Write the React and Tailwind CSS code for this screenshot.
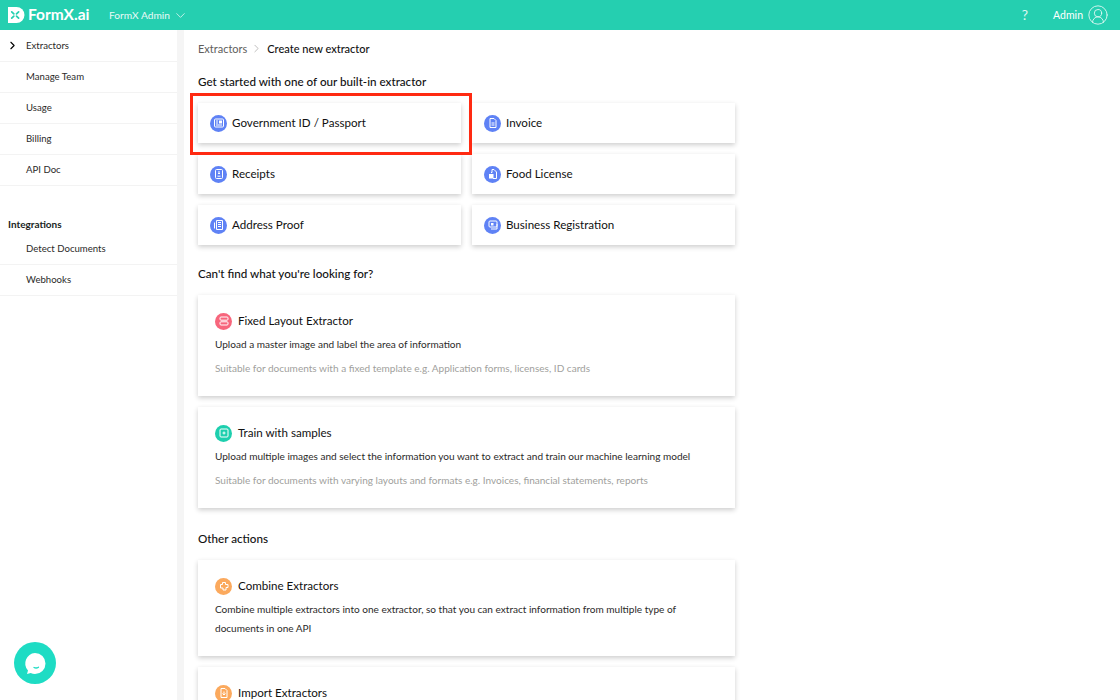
import React from "react";
import { ChevronRight, ChevronDown, CircleUserRound } from "lucide-react";

const F = "font-['Lato','Noto_Sans',sans-serif]";

function Round({ color, children }) {
  return (
    <span className={`w-[17px] h-[17px] ${color} rounded-full flex items-center justify-center shrink-0`}>
      <svg width="12" height="12" viewBox="0 0 12 12" fill="none" stroke="#fff" strokeWidth="1">{children}</svg>
    </span>
  );
}

const idIcon = <><rect x="1.500" y="2" width="9" height="8" rx="1" /><rect x="6" y="3.500" width="3" height="3" fill="#fff" stroke="none" /><path d="M3 4h2M3 6h2M3 8h6" /></>;
const receiptIcon = <><rect x="2.500" y="1.500" width="7" height="9" rx="1" /><path d="M6 3v3M5 5l1 1 1-1M4.500 8.200h3" /></>;
const addressIcon = <><path d="M3.500 1.500h6v9h-6z" /><path d="M5 3.500h3M5 5.500h3M5 7.500h3" /><path d="M1.500 3.500v6" /></>;
const invoiceIcon = <><path d="M3 1.500h4l2 2v7H3z" /><path d="M4.500 6h3M4.500 8h3" /></>;
const foodIcon = <><path d="M5 1.500h2l2.500 2.500v6.500H6" /><rect x="2" y="6" width="4.500" height="4.500" fill="#fff" stroke="none" /><path d="M5 1.500v3H4" /></>;
const bizIcon = <><rect x="2" y="2" width="8" height="6" rx="1" /><path d="M4 10h6V5" /><rect x="4" y="4" width="2.500" height="2.500" fill="#fff" stroke="none" /></>;
const fixedIcon = <><rect x="2" y="2" width="8" height="3.200" rx="1" /><rect x="2" y="6.800" width="8" height="3.200" rx="1" /></>;
const trainIcon = <><rect x="2" y="2" width="8" height="8" rx="1" /><path d="M6 4.500v3M4.500 6h3" /></>;
const combineIcon = <path d="M4.500 2.500h3v2H10v3H8V10H5V8H2.500V4.500h2z" />;
const importIcon = <><path d="M3 1.500h4l2 2v7H3z" /><path d="M6 4.500V8M4.500 6.500L6 8l1.500-1.500" /></>;

function SmallCard({ label, icon }) {
  return (
    <div className="h-10 bg-white flex items-center pl-3 gap-[5px] shadow-[0_2px_5px_rgba(0,0,0,0.2)]">
      <Round color="bg-[#5f82f5]">{icon}</Round>
      <span className="text-[11.6px] leading-none text-[#111]">{label}</span>
    </div>
  );
}

function BigCard({ title, color, icon, desc, note, h }) {
  return (
    <div className={`${h} bg-white shadow-[0_2px_5px_rgba(0,0,0,0.2)] pt-[17px] px-[17px] shrink-0`}>
      <div className="flex items-center gap-[6px] h-[18px]">
        <Round color={color}>{icon}</Round>
        <span className="text-[11.6px] leading-none text-[#111]">{title}</span>
      </div>
      <p className="mt-[5px] text-[10.05px] leading-[19px] text-[#2b2a29]">{desc}</p>
      {note && <p className="mt-[5px] text-[10.05px] leading-[19px] text-[#a19f9d]">{note}</p>}
    </div>
  );
}

function NavItem({ label, active }) {
  return (
    <div className="h-[31px] flex items-center border-b border-[#f3f3f3] relative pl-[26px] pt-[1px] text-[9.6px] text-[#2b2a29]">
      {active && <ChevronRight className="absolute left-[6px] top-[8px] text-black" size={13} strokeWidth={2} />}
      {label}
    </div>
  );
}

export default function App() {
  return (
    <div className={`w-[1120px] h-[700px] overflow-hidden flex flex-col bg-white ${F}`}>
      <header className="h-[30px] shrink-0 bg-[#25cfb0] flex items-center text-white">
        <div className="ml-2 flex items-center gap-[3px] w-[101px]">
          <svg width="17" height="16" viewBox="0 0 16 15">
            <path d="M0 0h8a7.500 7.500 0 0 1 0 15H0z" fill="#fff" />
            <path d="M3.500 4.500l2 2M10 4.500l-2 2M3.500 10.500l2-2M10 10.500l-2-2" stroke="#25cfb0" strokeWidth="1.600" strokeLinecap="round" />
          </svg>
          <span className="text-[15.5px] font-bold leading-none">FormX.ai</span>
        </div>
        <span className="text-[10.2px] leading-none opacity-90">FormX Admin</span>
        <ChevronDown className="ml-[3px] opacity-90" size={15} strokeWidth={1.25} />
        <div className="ml-auto flex items-center">
          <span className="text-[14px] font-normal opacity-85 mr-[25px] leading-none">?</span>
          <span className="text-[10.500px] font-normal leading-none mr-[4px]">Admin</span>
          <CircleUserRound className="mr-[11px] opacity-85" size={22} strokeWidth={1} />
        </div>
      </header>
      <div className="flex flex-1 min-h-0">
        <aside className="w-[177px] shrink-0 relative pt-px">
          <NavItem label="Extractors" active />
          <NavItem label="Manage Team" />
          <NavItem label="Usage" />
          <NavItem label="Billing" />
          <NavItem label="API Doc" />
          <div className="mt-[31px] pl-2 text-[10px] font-bold text-[#201f1e] leading-[14px] mb-[3px]">Integrations</div>
          <NavItem label="Detect Documents" />
          <NavItem label="Webhooks" />
          <div className="absolute left-[14px] top-[612px] w-[42px] h-[42px] rounded-full bg-[#1edcc4] flex items-center justify-center">
            <svg width="26" height="26" viewBox="0 0 26 26">
              <path d="M13 3a10.500 10.500 0 0 1 0 21c-1.600 0-3-.3-4.300-.9L5 24l1-3.500A10.500 10.500 0 0 1 13 3z" fill="#fff" />
              <path d="M12 17.500c1.500.7 3 .7 4.500-.3" stroke="#1edcc4" strokeWidth="1.300" fill="none" strokeLinecap="round" />
            </svg>
          </div>
        </aside>
        <div className="w-[7px] shrink-0 bg-[#f5f5f5]" />
        <main className="flex-1 pl-[14px] min-w-0 overflow-hidden">
          <div className="w-[537px]">
            <div className="h-[19px] mt-[9px] flex items-center text-[11px] leading-none">
              <span className="text-[#605e5c]">Extractors</span>
              <ChevronRight className="mx-[3px] text-[#8a8886]" size={13} strokeWidth={1} />
              <span className="text-[#111] font-medium ml-[1px]">Create new extractor</span>
            </div>
            <h2 className="mt-[16px] text-[11.650px] leading-[16px] font-medium text-[#111]">Get started with one of our built-in extractor</h2>
            <div className="mt-[13px] grid grid-cols-2 gap-x-[11px] gap-y-[11px] relative">
              <SmallCard label="Government ID / Passport" icon={idIcon} />
              <SmallCard label="Invoice" icon={invoiceIcon} />
              <SmallCard label="Receipts" icon={receiptIcon} />
              <SmallCard label="Food License" icon={foodIcon} />
              <SmallCard label="Address Proof" icon={addressIcon} />
              <SmallCard label="Business Registration" icon={bizIcon} />
              <div className="absolute left-[-8px] top-[-10px] w-[282px] h-[62px] border-[3px] border-[#ff2a12]" />
            </div>
            <h2 className="mt-[21px] text-[11.650px] leading-[16px] font-medium text-[#111]">Can't find what you're looking for?</h2>
            <div className="mt-[13px] flex flex-col gap-[11px]">
              <BigCard h="h-[101px]" title="Fixed Layout Extractor" color="bg-[#f7667c]" icon={fixedIcon} desc="Upload a master image and label the area of information" note="Suitable for documents with a fixed template e.g. Application forms, licenses, ID cards" />
              <BigCard h="h-[101px]" title="Train with samples" color="bg-[#1dcfae]" icon={trainIcon} desc="Upload multiple images and select the information you want to extract and train our machine learning model" note="Suitable for documents with varying layouts and formats e.g. Invoices, financial statements, reports" />
            </div>
            <h2 className="mt-[23px] text-[11.650px] leading-[16px] font-medium text-[#111]">Other actions</h2>
            <div className="mt-[13px] flex flex-col gap-[11px]">
              <BigCard h="h-[96px]" title="Combine Extractors" color="bg-[#fba95d]" icon={combineIcon} desc="Combine multiple extractors into one extractor, so that you can extract information from multiple type of documents in one API" />
              <BigCard h="h-[96px]" title="Import Extractors" color="bg-[#fba95d]" icon={importIcon} desc="" />
            </div>
          </div>
        </main>
      </div>
    </div>
  );
}
